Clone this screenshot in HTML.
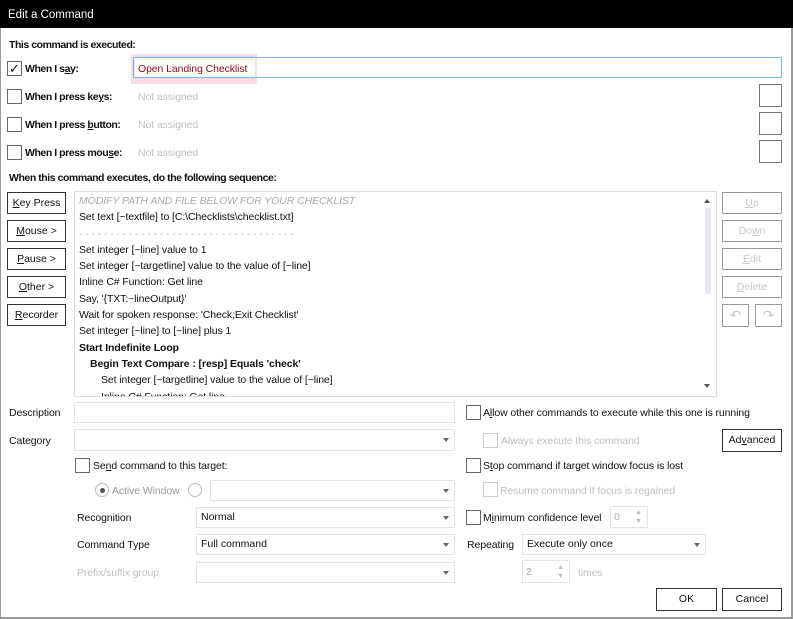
<!DOCTYPE html>
<html><head><meta charset="utf-8"><style>
*{box-sizing:border-box;margin:0;padding:0}
body{width:793px;height:619px;overflow:hidden;background:#fff;font-family:"Liberation Sans",sans-serif;font-size:10.5px;color:#111;position:relative}
.a{position:absolute;white-space:nowrap}
.t{position:absolute;white-space:nowrap;line-height:14px;letter-spacing:-0.1px}
.b{font-weight:bold;letter-spacing:-0.45px}
.cb{position:absolute;width:15px;height:15px;border:1px solid #666;background:#fff}
.cbd{position:absolute;width:15px;height:15px;border:1px solid #ccc;background:#fff}
.btn{position:absolute;border:1px solid #333;background:#fff;text-align:center;line-height:20px}
.dbtn{position:absolute;border:1px solid #999;background:#fff;text-align:center;line-height:20px;color:#c8c8c8}
.inp{position:absolute;border:1px solid #e3e3e3;background:#fff}
.sel{position:absolute;border:1px solid #e3e3e3;background:#fff;line-height:19px;padding-left:4px}
.sel:after{content:"";position:absolute;right:5px;top:8px;border-left:3.5px solid transparent;border-right:3.5px solid transparent;border-top:4px solid #666}
.g{color:#c0c0c0}
.list div{height:16.3px;line-height:16px;letter-spacing:-0.1px}
u{text-decoration:underline}
</style></head><body>
<div class="a" style="left:0;top:0;width:793px;height:28px;background:#000;color:#fff;font-size:11.5px;padding:8px 0 0 8px;line-height:14px">Edit a Command</div>
<div class="a" style="left:791px;top:28px;width:2px;height:591px;background:#999"></div>
<div class="a" style="left:0;top:28px;width:1px;height:591px;background:#999"></div>
<div class="a" style="left:0;top:617px;width:793px;height:2px;background:#999"></div>

<div class="t b" style="left:9px;top:38px">This command is executed:</div>
<div class="cb" style="left:7px;top:61px;font-size:13px;line-height:13px;text-align:center">✓</div>
<div class="t b" style="left:25px;top:62px">When I s<u>a</u>y:</div>
<div class="a" style="left:131px;top:54px;width:126px;height:30px;background:#fcdce2"></div>
<div class="a" style="left:133px;top:57px;width:649px;height:21px;border:1px solid #7ab8f0;background:transparent"></div>
<div class="a" style="left:135px;top:58px;width:120px;height:19px;background:#fff"></div>
<div class="t" style="left:138px;top:62px;color:#8b1020">Open Landing Checklist</div>

<div class="cb" style="left:7px;top:89px"></div><div class="t b" style="left:25px;top:90px">When I press ke<u>y</u>s:</div><div class="t g" style="left:138px;top:90px">Not assigned</div>
<div class="cb" style="left:7px;top:117px"></div><div class="t b" style="left:25px;top:118px">When I press <u>b</u>utton:</div><div class="t g" style="left:138px;top:118px">Not assigned</div>
<div class="cb" style="left:7px;top:145px"></div><div class="t b" style="left:25px;top:146px">When I press mou<u>s</u>e:</div><div class="t g" style="left:138px;top:146px">Not assigned</div>
<div class="dbtn" style="left:759px;top:84px;width:23px;height:23px;border-color:#777"></div>
<div class="dbtn" style="left:759px;top:112px;width:23px;height:23px;border-color:#777"></div>
<div class="dbtn" style="left:759px;top:140px;width:23px;height:23px;border-color:#777"></div>

<div class="t b" style="left:9px;top:171px">When this command executes, do the following sequence:</div>
<div class="btn" style="left:7px;top:192px;width:59px;height:22px"><u>K</u>ey Press</div>
<div class="btn" style="left:7px;top:220px;width:59px;height:22px"><u>M</u>ouse &gt;</div>
<div class="btn" style="left:7px;top:248px;width:59px;height:22px"><u>P</u>ause &gt;</div>
<div class="btn" style="left:7px;top:276px;width:59px;height:22px"><u>O</u>ther &gt;</div>
<div class="btn" style="left:7px;top:304px;width:59px;height:22px"><u>R</u>ecorder</div>

<div class="a" style="left:74px;top:191px;width:643px;height:206px;border:1px solid #ddd;overflow:hidden">
<div class="list" style="position:absolute;left:4px;top:1px">
<div style="color:#aaa;font-style:italic">MODIFY PATH AND FILE BELOW FOR YOUR CHECKLIST</div>
<div>Set text [~textfile] to [C:\Checklists\checklist.txt]</div>
<div style="color:#bbb">- - - - - - - - - - - - - - - - - - - - - - - - - - - - - - - - - - -</div>
<div>Set integer [~line] value to 1</div>
<div>Set integer [~targetline] value to the value of [~line]</div>
<div>Inline C# Function: Get line</div>
<div>Say, '{TXT:~lineOutput}'</div>
<div>Wait for spoken response: 'Check;Exit Checklist'</div>
<div>Set integer [~line] to [~line] plus 1</div>
<div class="b">Start Indefinite Loop</div>
<div class="b" style="padding-left:11px">Begin Text Compare : [resp] Equals 'check'</div>
<div style="padding-left:22px">Set integer [~targetline] value to the value of [~line]</div>
<div style="padding-left:22px">Inline C# Function: Get line</div>
</div>
<div class="a" style="left:630px;top:16px;width:6px;height:86px;background:#e4e8f8"></div>
<div class="a" style="left:629px;top:7px;border-left:3.5px solid transparent;border-right:3.5px solid transparent;border-bottom:4px solid #555"></div>
<div class="a" style="left:629px;top:192px;border-left:3.5px solid transparent;border-right:3.5px solid transparent;border-top:4px solid #555"></div>
</div>

<div class="dbtn" style="left:722px;top:192px;width:60px;height:22px"><u>U</u>p</div>
<div class="dbtn" style="left:722px;top:220px;width:60px;height:22px">Do<u>w</u>n</div>
<div class="dbtn" style="left:722px;top:248px;width:60px;height:22px"><u>E</u>dit</div>
<div class="dbtn" style="left:722px;top:276px;width:60px;height:22px"><u>D</u>elete</div>
<div class="dbtn" style="left:722px;top:304px;width:27px;height:23px;font-size:14px">↶</div>
<div class="dbtn" style="left:755px;top:304px;width:27px;height:23px;font-size:14px">↷</div>

<div class="t" style="left:9px;top:406px">Description</div>
<div class="inp" style="left:74px;top:402px;width:381px;height:21px"></div>
<div class="t" style="left:9px;top:434px">Category</div>
<div class="sel" style="left:74px;top:429px;width:381px;height:22px"></div>
<div class="cb" style="left:466px;top:405px"></div><div class="t" style="left:483px;top:406px">A<u>l</u>low other commands to execute while this one is running</div>
<div class="cbd" style="left:483px;top:433px"></div><div class="t g" style="left:501px;top:434px">Always execute this command</div>
<div class="btn" style="left:722px;top:429px;width:60px;height:23px">Ad<u>v</u>anced</div>

<div class="cb" style="left:75px;top:458px"></div><div class="t" style="left:93px;top:459px">Se<u>n</u>d command to this target:</div>
<div class="a" style="left:95px;top:483px;width:14px;height:14px;border:1px solid #bbb;border-radius:50%"><div style="position:absolute;left:3.5px;top:3.5px;width:5px;height:5px;border-radius:50%;background:#555"></div></div>
<div class="t g" style="left:112px;top:484px;color:#999">Active Window</div>
<div class="a" style="left:188px;top:483px;width:14px;height:14px;border:1px solid #bbb;border-radius:50%"></div>
<div class="sel" style="left:210px;top:480px;width:245px;height:21px"></div>
<div class="cb" style="left:466px;top:458px"></div><div class="t" style="left:483px;top:459px">S<u>t</u>op command if target window focus is lost</div>
<div class="cbd" style="left:483px;top:482px"></div><div class="t g" style="left:500px;top:484px">Resume command if focus is regained</div>

<div class="t" style="left:77px;top:511px">Recognition</div>
<div class="sel" style="left:196px;top:507px;width:259px;height:21px">Normal</div>
<div class="t" style="left:77px;top:538px">Command Type</div>
<div class="sel" style="left:196px;top:534px;width:259px;height:21px">Full command</div>
<div class="t g" style="left:77px;top:566px">Prefix/suffix group</div>
<div class="sel" style="left:196px;top:562px;width:259px;height:21px"></div>

<div class="cb" style="left:466px;top:510px"></div><div class="t" style="left:483px;top:511px">M<u>i</u>nimum confidence level</div>
<div class="inp" style="left:610px;top:506px;width:38px;height:22px;color:#aaa;padding:4px 0 0 3px">0<span style="position:absolute;right:5px;top:1px;font-size:7px;line-height:9px;color:#bbb">▲<br>▼</span></div>
<div class="t" style="left:467px;top:538px">Repeating</div>
<div class="sel" style="left:522px;top:534px;width:184px;height:21px">Execute only once</div>
<div class="inp" style="left:522px;top:560px;width:48px;height:23px;color:#aaa;padding:5px 0 0 3px">2<span style="position:absolute;right:5px;top:2px;font-size:7px;line-height:9px;color:#bbb">▲<br>▼</span></div>
<div class="t g" style="left:578px;top:566px">times</div>

<div class="btn" style="left:656px;top:588px;width:61px;height:23px">OK</div>
<div class="btn" style="left:722px;top:588px;width:60px;height:23px">Cancel</div>
</body></html>
